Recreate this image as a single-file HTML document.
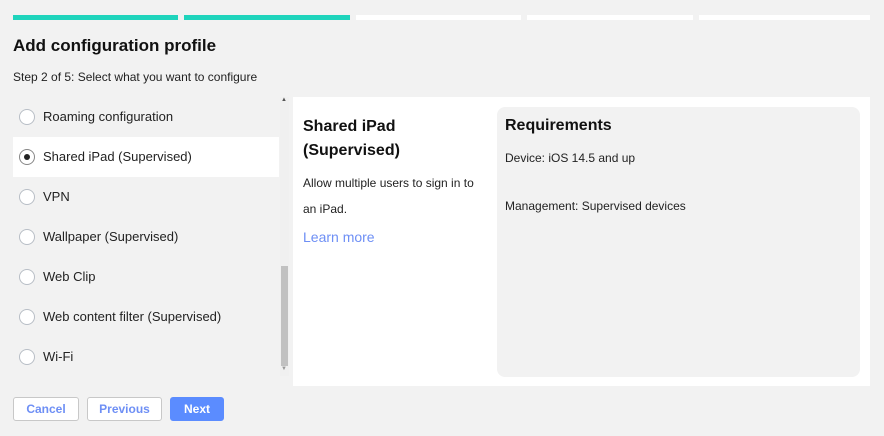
<!DOCTYPE html>
<html><head><meta charset="utf-8"><style>
*{margin:0;padding:0;box-sizing:border-box}
body{width:884px;height:436px;background:#f2f2f2;font-family:"Liberation Sans",sans-serif;color:#111;position:relative;overflow:hidden}
.abs{position:absolute}
.bar{position:absolute;top:15px;height:5px}
.t{position:absolute;white-space:nowrap}
.item{position:absolute;left:13px;width:266px;height:40px}
.item .r{position:absolute;left:6px;top:12px;width:16px;height:16px;border:1.5px solid #b8bec6;border-radius:50%;background:#fff}
.item .l{position:absolute;left:30px;top:12px;font-size:13px;color:#222}
.btn{position:absolute;top:397px;height:24px;border:1px solid #c8c8c8;border-radius:3px;background:#fff;color:#6e8ff5;font-size:12px;font-weight:bold;text-align:center;line-height:22px}
</style></head><body>
<div class="bar" style="left:13px;width:165px;background:#1fd4bc"></div>
<div class="bar" style="left:184px;width:166px;background:#1fd4bc"></div>
<div class="bar" style="left:356px;width:165px;background:#fff"></div>
<div class="bar" style="left:527px;width:166px;background:#fff"></div>
<div class="bar" style="left:699px;width:171px;background:#fff"></div>
<div class="t" style="left:13px;top:36px;font-size:17px;font-weight:bold">Add configuration profile</div>
<div class="t" style="left:13px;top:70px;font-size:12px;color:#222">Step 2 of 5: Select what you want to configure</div>

<div class="item" style="top:97px"><div class="r"></div><div class="l">Roaming configuration</div></div>
<div class="item" style="top:137px;background:#fff"><div class="r" style="border-color:#888"><div style="position:absolute;left:3.5px;top:3.5px;width:6px;height:6px;border-radius:50%;background:#222"></div></div><div class="l">Shared iPad (Supervised)</div></div>
<div class="item" style="top:177px"><div class="r"></div><div class="l">VPN</div></div>
<div class="item" style="top:217px"><div class="r"></div><div class="l">Wallpaper (Supervised)</div></div>
<div class="item" style="top:257px"><div class="r"></div><div class="l">Web Clip</div></div>
<div class="item" style="top:297px"><div class="r"></div><div class="l">Web content filter (Supervised)</div></div>
<div class="item" style="top:337px"><div class="r"></div><div class="l">Wi-Fi</div></div>

<div class="abs" style="left:280px;top:97px;width:9px;height:279px;background:#f0f0f0"></div>
<div class="abs" style="left:281px;top:266px;width:7px;height:100px;background:#c1c1c1"></div>
<div class="t" style="left:281px;top:97px;font-size:6px;color:#555">▲</div>
<div class="t" style="left:281px;top:366px;font-size:6px;color:#999">▼</div>

<div class="abs" style="left:293px;top:97px;width:577px;height:289px;background:#fff"></div>
<div class="abs" style="left:497px;top:107px;width:363px;height:270px;background:#f2f2f2;border-radius:8px"></div>
<div class="t" style="left:303px;top:115px;font-size:16px;font-weight:bold;line-height:24px;white-space:normal;width:180px">Shared iPad<br>(Supervised)</div>
<div class="t" style="left:303px;top:170px;font-size:12px;line-height:26px;color:#222">Allow multiple users to sign in to<br>an iPad.</div>
<div class="t" style="left:303px;top:229px;font-size:14px;color:#6e8ff5">Learn more</div>
<div class="t" style="left:505px;top:117px;font-size:16px;font-weight:bold">Requirements</div>
<div class="t" style="left:505px;top:151px;font-size:12px;color:#222">Device: iOS 14.5 and up</div>
<div class="t" style="left:505px;top:199px;font-size:12px;color:#222">Management: Supervised devices</div>

<div class="btn" style="left:13px;width:66px">Cancel</div>
<div class="btn" style="left:87px;width:75px">Previous</div>
<div class="btn" style="left:170px;width:54px;background:#5b8cff;border-color:#5b8cff;color:#fff">Next</div>
</body></html>
